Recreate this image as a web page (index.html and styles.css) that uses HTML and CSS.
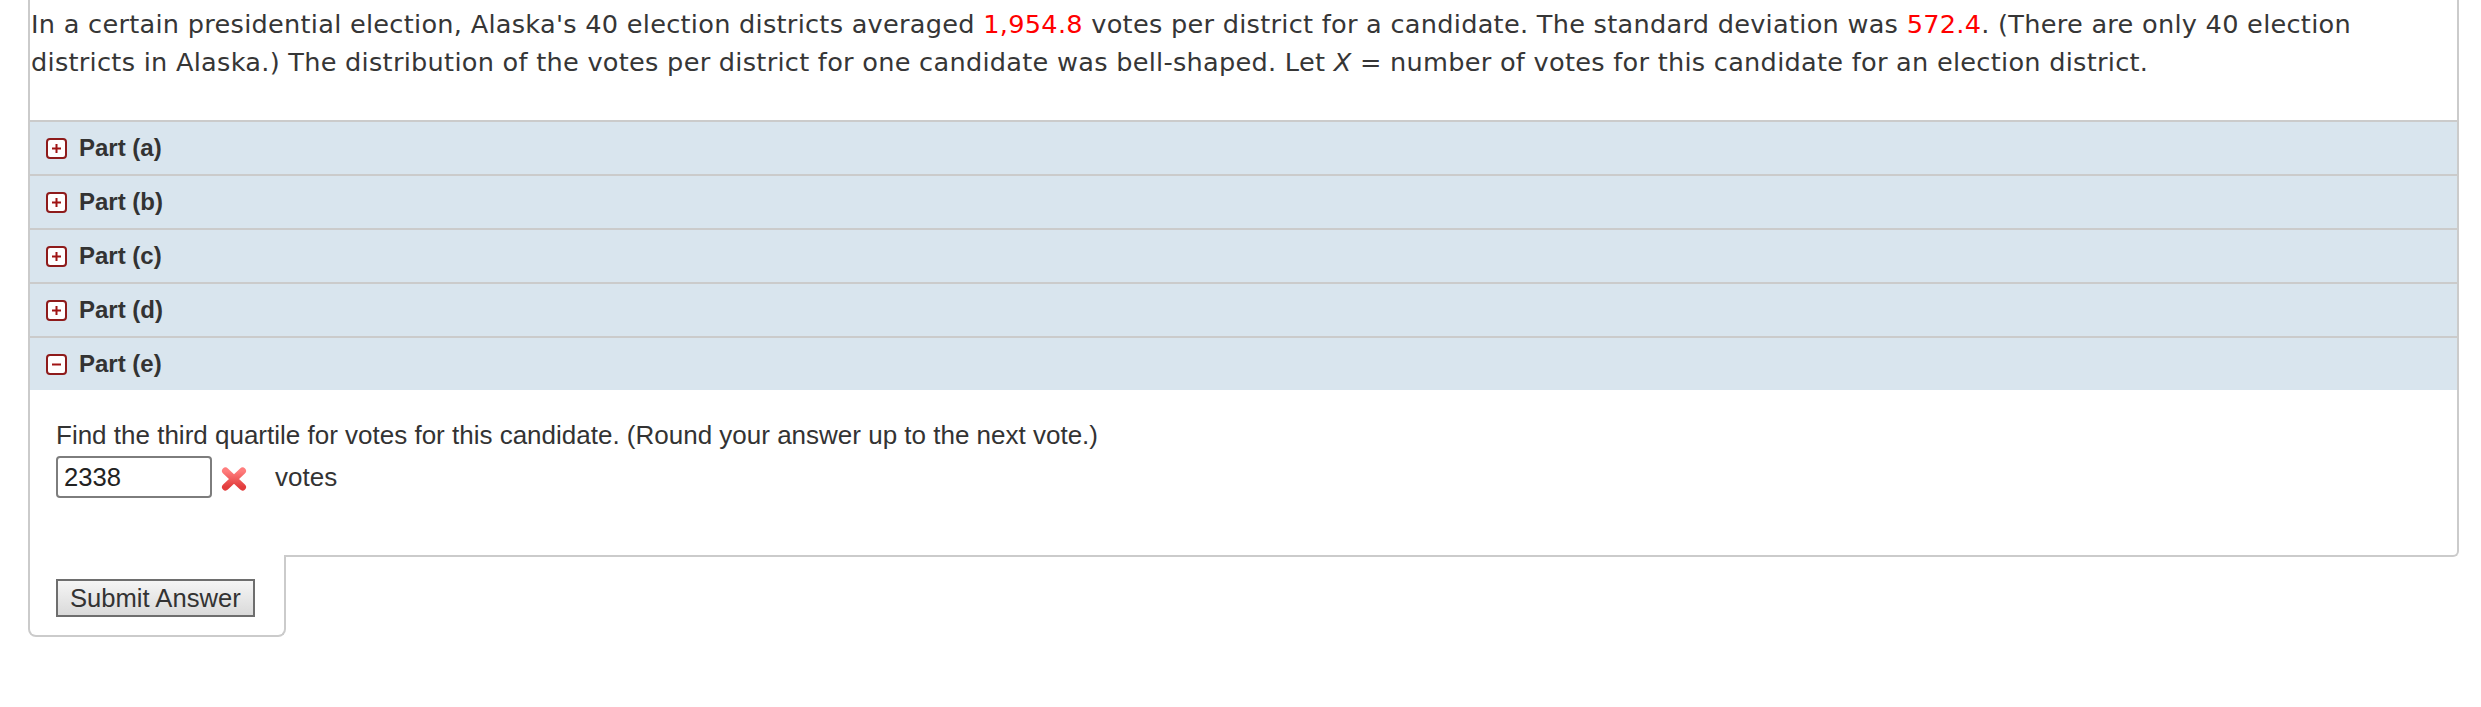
FILE: index.html
```html
<!DOCTYPE html>
<html lang="en">
<head>
<meta charset="utf-8">
<title>Question</title>
<link rel="stylesheet" href="styles.css">
</head>
<body>
<div class="question-box">
  <p class="intro">In a certain presidential election, Alaska's 40 election districts averaged <span class="red">1,954.8</span> votes per district for a candidate. The standard deviation was <span class="red">572.4</span>. (There are only 40 election districts in Alaska.) The distribution of the votes per district for one candidate was bell-shaped. Let <i>X</i> = number of votes for this candidate for an election district.</p>
  <div class="part"><span class="toggle"><svg viewBox="0 0 21 21" width="21" height="21"><rect x="1" y="1" width="19" height="19" rx="3" fill="#fff" stroke="#8e1b1b" stroke-width="2"/><path d="M6 10.5h9M10.5 6v9" stroke="#a01414" stroke-width="2"/></svg></span>Part (a)</div>
  <div class="part"><span class="toggle"><svg viewBox="0 0 21 21" width="21" height="21"><rect x="1" y="1" width="19" height="19" rx="3" fill="#fff" stroke="#8e1b1b" stroke-width="2"/><path d="M6 10.5h9M10.5 6v9" stroke="#a01414" stroke-width="2"/></svg></span>Part (b)</div>
  <div class="part"><span class="toggle"><svg viewBox="0 0 21 21" width="21" height="21"><rect x="1" y="1" width="19" height="19" rx="3" fill="#fff" stroke="#8e1b1b" stroke-width="2"/><path d="M6 10.5h9M10.5 6v9" stroke="#a01414" stroke-width="2"/></svg></span>Part (c)</div>
  <div class="part"><span class="toggle"><svg viewBox="0 0 21 21" width="21" height="21"><rect x="1" y="1" width="19" height="19" rx="3" fill="#fff" stroke="#8e1b1b" stroke-width="2"/><path d="M6 10.5h9M10.5 6v9" stroke="#a01414" stroke-width="2"/></svg></span>Part (d)</div>
  <div class="part"><span class="toggle"><svg viewBox="0 0 21 21" width="21" height="21"><rect x="1" y="1" width="19" height="19" rx="3" fill="#fff" stroke="#8e1b1b" stroke-width="2"/><path d="M6 10.5h9" stroke="#a01414" stroke-width="2"/></svg></span>Part (e)</div>
  <div class="answer-area">
    <p class="prompt">Find the third quartile for votes for this candidate. (Round your answer up to the next vote.)</p>
    <div class="answer-row">
      <input class="answer-input" type="text" value="2338">
      <svg class="wrong" viewBox="0 0 28 26" width="28" height="26">
        <defs><linearGradient id="xg" x1="0" y1="0" x2="0" y2="1"><stop offset="0" stop-color="#ff7d7d"/><stop offset="1" stop-color="#e23c3c"/></linearGradient></defs>
        <path d="M5.5 5l17 16M22.5 5l-17 16" stroke="url(#xg)" stroke-width="7" stroke-linecap="round"/>
      </svg>
      <span class="unit">votes</span>
    </div>
  </div>
</div>
<div class="tab">
  <button class="submit" type="button">Submit Answer</button>
</div>
</body>
</html>
```
FILE: styles.css
```css
html, body {
  margin: 0;
  padding: 0;
  background: #fff;
}

body {
  color: #333;
}

.question-box {
  margin: 0 22px 0 28px;
  border: 2px solid #cbcbcb;
  border-top: none;
  border-bottom-right-radius: 6px;
  background: #fff;
}

.intro {
  margin: 0;
  padding: 5px 60px 39px 1px;
  font-family: "DejaVu Sans", Verdana, sans-serif;
  font-size: 25.6px;
  letter-spacing: 0.27px;
  line-height: 38px;
  color: #363636;
}

.red {
  color: #f00;
}

.part {
  display: flex;
  align-items: center;
  gap: 12px;
  height: 52px;
  padding-left: 16px;
  border-top: 2px solid #cbcbcb;
  background: #d9e5ee;
  font-family: "Liberation Sans", Arial, sans-serif;
  font-weight: bold;
  font-size: 24px;
  color: #333;
}

.toggle {
  display: flex;
  width: 21px;
  height: 21px;
}

.answer-area {
  padding: 31px 0 57px 26px;
  font-family: "Liberation Sans", Arial, sans-serif;
  font-size: 26px;
  color: #333;
}

.prompt {
  margin: 0;
  line-height: 29px;
}

.answer-row {
  display: flex;
  align-items: center;
  margin-top: 6px;
}

.answer-input {
  box-sizing: border-box;
  width: 156px;
  height: 42px;
  padding: 0 6px;
  border: 2px solid #7d7d7d;
  border-radius: 4px;
  font-family: "Liberation Sans", Arial, sans-serif;
  font-size: 25.6px;
  color: #222;
  background: #fff;
  outline: none;
}

.wrong {
  margin-left: 8px;
  margin-top: 4px;
}

.unit {
  margin-left: 27px;
}

.tab {
  box-sizing: border-box;
  width: 258px;
  margin: -2px 0 0 28px;
  padding: 24px 0 18px 26px;
  border: 2px solid #cbcbcb;
  border-top: none;
  border-radius: 0 0 8px 8px;
  background: #fff;
}

.submit {
  display: block;
  box-sizing: border-box;
  height: 38px;
  padding: 0 12px;
  border: 2px solid #6e6e6e;
  border-radius: 0;
  background: linear-gradient(#f5f5f5, #dadada);
  font-family: "Liberation Sans", Arial, sans-serif;
  font-size: 25.6px;
  color: #333;
}
```
